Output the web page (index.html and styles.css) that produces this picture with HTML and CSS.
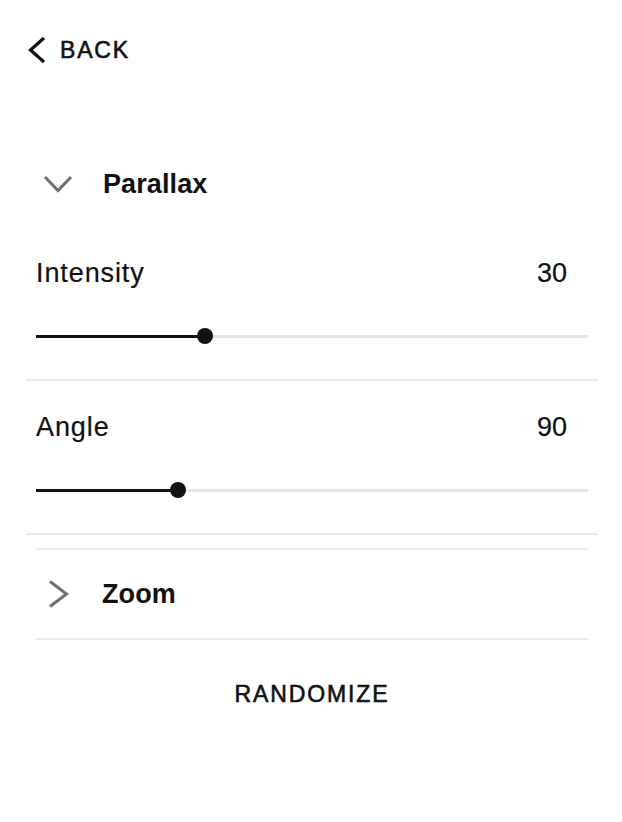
FILE: index.html
```html
<!DOCTYPE html>
<html lang="en">
<head>
<meta charset="UTF-8" />
<meta name="viewport" content="width=device-width, initial-scale=1" />
<title>Parallax Settings</title>
<link rel="stylesheet" href="styles.css">
</head>
<body>

<div class="panel">
  <a class="back" href="#">
    <svg class="back-icon" width="20" height="28" viewBox="0 0 20 28">
      <polyline points="17,2 3.5,14 17,26" fill="none" stroke="#111" stroke-width="3.2" />
    </svg>
    <span>BACK</span>
  </a>

  <div class="group">
    <div class="group-head">
      <span class="chev">
        <svg width="30" height="18" viewBox="0 0 30 18">
          <polyline points="2,2 15,15.5 28,2" fill="none" stroke="#707070" stroke-width="3" />
        </svg>
      </span>
      <span class="group-title">Parallax</span>
    </div>

    <div class="field">
      <div class="field-top">
        <span class="field-label">Intensity</span>
        <span class="field-value">30</span>
      </div>
      <div class="slider" style="--p: 0.3">
        <div class="track"></div>
        <div class="fill"></div>
        <div class="thumb"></div>
      </div>
    </div>

    <div class="field">
      <div class="field-top">
        <span class="field-label">Angle</span>
        <span class="field-value">90</span>
      </div>
      <div class="slider" style="--p: 0.25">
        <div class="track"></div>
        <div class="fill"></div>
        <div class="thumb"></div>
      </div>
    </div>
  </div>

  <div class="collapsed">
    <span class="chev">
      <svg width="30" height="28" viewBox="0 0 30 28">
        <polyline points="7,1.5 23.5,14 7,26.5" fill="none" stroke="#707070" stroke-width="3" />
      </svg>
    </span>
    <span class="group-title">Zoom</span>
  </div>

  <button class="randomize">RANDOMIZE</button>
</div>

</body>
</html>
```

FILE: styles.css
```css
* {
  box-sizing: border-box;
}
body {
  margin: 0;
  background: #fff;
  color: #111;
  font-family: 'Liberation Sans', Arial, sans-serif;
}
.panel {
  width: 622px;
  padding: 0 24px 40px 26px;
}
.back {
  display: flex;
  align-items: center;
  gap: 13px;
  height: 28px;
  margin-top: 36px;
  padding-left: 1px;
  color: #111;
  text-decoration: none;
  font-size: 23px;
  letter-spacing: 1.8px;
  -webkit-text-stroke: 0.6px #111;
}
.back-icon {
  display: block;
}
.group-head {
  display: flex;
  align-items: center;
  height: 60px;
  margin-top: 90px;
  margin-bottom: 13px;
  padding-left: 17px;
}
.chev {
  width: 30px;
  display: flex;
  justify-content: center;
  margin-right: 30px;
}
.chev svg {
  display: block;
}
.group-title {
  font-size: 27px;
  font-weight: 700;
  letter-spacing: 0.1px;
}
.field {
  padding: 30px 10px 35px;
  border-bottom: 2px solid #ebebeb;
}
.field-top {
  display: flex;
  justify-content: space-between;
  align-items: center;
  height: 32px;
  padding-right: 21px;
  font-size: 27px;
  letter-spacing: 0.9px;
  -webkit-text-stroke: 0.2px #111;
}
.field-value {
  letter-spacing: 0;
}
.slider {
  position: relative;
  display: flex;
  align-items: center;
  height: 16px;
  margin-top: 39px;
}
.track {
  width: 100%;
  height: 3px;
  background: #e6e6e6;
}
.fill {
  position: absolute;
  left: 0;
  top: 6.5px;
  height: 3px;
  width: calc(var(--p) * (100% - 16px) + 8px);
  background: #111;
}
.thumb {
  position: absolute;
  top: 0;
  left: calc(var(--p) * (100% - 16px));
  width: 16px;
  height: 16px;
  border-radius: 50%;
  background: #111;
}
.collapsed {
  display: flex;
  align-items: center;
  height: 92px;
  margin: 13px 10px 0;
  padding-left: 7px;
  border-top: 2px solid #ebebeb;
  border-bottom: 2px solid #ebebeb;
}
.collapsed .chev {
  margin-right: 29px;
}
.randomize {
  display: block;
  margin: 34px auto 0;
  height: 40px;
  padding: 0;
  border: none;
  background: none;
  color: #111;
  font-family: inherit;
  font-size: 23px;
  letter-spacing: 1.9px;
  -webkit-text-stroke: 0.6px #111;
  cursor: pointer;
}
```
